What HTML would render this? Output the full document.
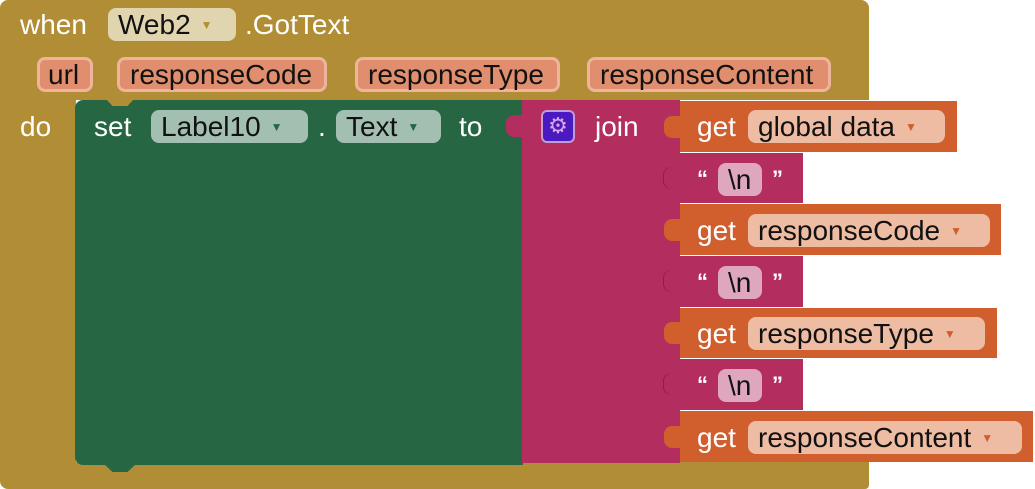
<!DOCTYPE html>
<html><head><style>
*{margin:0;padding:0;box-sizing:border-box}
body{width:1035px;height:489px;background:#fff;position:relative;overflow:hidden;font-family:"Liberation Sans",Arial,sans-serif;font-size:28px}
.a{position:absolute}
.t{position:absolute;color:#fff;line-height:33px;white-space:nowrap}
.f{position:absolute;border-radius:8px;color:#111;line-height:33px;padding-left:10px;white-space:nowrap;height:33px}
.dd{font-size:12px;vertical-align:5px;margin-left:10px}
.q{font-size:22px;font-weight:bold}
</style></head><body>
<div class="a" style="left:0;top:0;width:869px;height:100px;background:#B18E35;border-radius:8px 8px 0 0"></div>
<div class="a" style="left:0;top:90px;width:76px;height:380px;background:#B18E35"></div>
<div class="a" style="left:0;top:462px;width:869px;height:27px;background:#B18E35;border-radius:0 0 4px 8px"></div>
<div class="t" style="left:20px;top:8px">when</div>
<div class="f" style="left:108px;top:8px;width:128px;background:#E1D5AF">Web2<span class="dd" style="color:#B18E35">▼</span></div>
<div class="t" style="left:245px;top:8px">.GotText</div>
<div class="f" style="left:37px;top:57px;width:56px;height:35px;background:#E08E6E;border:3px solid #EDB59C;padding-left:8px;line-height:29px">url</div>
<div class="f" style="left:117px;top:57px;width:210px;height:35px;background:#E08E6E;border:3px solid #EDB59C;line-height:29px">responseCode</div>
<div class="f" style="left:355px;top:57px;width:205px;height:35px;background:#E08E6E;border:3px solid #EDB59C;line-height:29px">responseType</div>
<div class="f" style="left:587px;top:57px;width:244px;height:35px;background:#E08E6E;border:3px solid #EDB59C;line-height:29px">responseContent</div>
<div class="t" style="left:20px;top:110px">do</div>
<div class="a" style="left:75px;top:100px;width:448px;height:365px;background:#266643;border-radius:8px 0 0 8px"></div>
<div class="a" style="left:105px;top:98px;width:30px;height:8px;background:#B18E35;clip-path:polygon(0 0,100% 0,75% 100%,25% 100%)"></div>
<div class="a" style="left:105px;top:465px;width:30px;height:7px;background:#266643;clip-path:polygon(0 0,100% 0,75% 100%,25% 100%)"></div>
<div class="t" style="left:94px;top:110px">set</div>
<div class="f" style="left:151px;top:110px;width:157px;background:#A3BFB1">Label10<span class="dd" style="color:#266643">▼</span></div>
<div class="t" style="left:318px;top:110px">.</div>
<div class="f" style="left:336px;top:110px;width:105px;background:#A3BFB1">Text<span class="dd" style="color:#266643">▼</span></div>
<div class="t" style="left:459px;top:110px">to</div>
<div class="a" style="left:522px;top:100px;width:158px;height:363px;background:#B32D5E"></div>
<div class="a" style="left:506px;top:115px;width:18px;height:22px;background:#B32D5E;border-radius:8px 0 0 8px"></div>
<div class="a" style="left:541px;top:110px;width:34px;height:33px;background:#4A1AC0;border:2px solid #C29BD9;border-radius:6px;color:#D9A6E8;font-size:22px;line-height:28px;text-align:center">⚙</div>
<div class="t" style="left:595px;top:110px">join</div>

<div class="a" style="left:680px;top:101px;width:277px;height:51px;background:#D05F2D"></div>
<div class="t" style="left:697px;top:110px">get</div>
<div class="f" style="left:748px;top:110px;width:197px;background:#EEBBA3">global data<span class="dd" style="color:#D05F2D">▼</span></div>

<div class="a" style="left:680px;top:153px;width:123px;height:50px;background:#B32D5E"></div>
<div class="t q" style="left:697px;top:162px">“</div>
<div class="f" style="left:718px;top:163px;width:44px;background:#DFA6BF">\n</div>
<div class="t q" style="left:772px;top:162px">”</div>

<div class="a" style="left:680px;top:204px;width:321px;height:51px;background:#D05F2D"></div>
<div class="t" style="left:697px;top:214px">get</div>
<div class="f" style="left:748px;top:214px;width:242px;background:#EEBBA3">responseCode<span class="dd" style="color:#D05F2D">▼</span></div>

<div class="a" style="left:680px;top:256px;width:123px;height:51px;background:#B32D5E"></div>
<div class="t q" style="left:697px;top:265px">“</div>
<div class="f" style="left:718px;top:266px;width:44px;background:#DFA6BF">\n</div>
<div class="t q" style="left:772px;top:265px">”</div>

<div class="a" style="left:680px;top:308px;width:317px;height:50px;background:#D05F2D"></div>
<div class="t" style="left:697px;top:317px">get</div>
<div class="f" style="left:748px;top:317px;width:237px;background:#EEBBA3">responseType<span class="dd" style="color:#D05F2D">▼</span></div>

<div class="a" style="left:680px;top:359px;width:123px;height:51px;background:#B32D5E"></div>
<div class="t q" style="left:697px;top:368px">“</div>
<div class="f" style="left:718px;top:369px;width:44px;background:#DFA6BF">\n</div>
<div class="t q" style="left:772px;top:368px">”</div>

<div class="a" style="left:680px;top:411px;width:353px;height:51px;background:#D05F2D"></div>
<div class="t" style="left:697px;top:421px">get</div>
<div class="f" style="left:748px;top:421px;width:274px;background:#EEBBA3">responseContent<span class="dd" style="color:#D05F2D">▼</span></div>

<div class="a" style="left:664px;top:116px;width:18px;height:22px;background:#D05F2D;border-radius:8px 0 0 8px"></div>
<div class="a" style="left:664px;top:167px;width:18px;height:22px;background:#B32D5E;border-radius:8px 0 0 8px;box-shadow:-1px 0 0 #8a2247"></div>
<div class="a" style="left:664px;top:219px;width:18px;height:22px;background:#D05F2D;border-radius:8px 0 0 8px"></div>
<div class="a" style="left:664px;top:270px;width:18px;height:22px;background:#B32D5E;border-radius:8px 0 0 8px;box-shadow:-1px 0 0 #8a2247"></div>
<div class="a" style="left:664px;top:322px;width:18px;height:22px;background:#D05F2D;border-radius:8px 0 0 8px"></div>
<div class="a" style="left:664px;top:373px;width:18px;height:22px;background:#B32D5E;border-radius:8px 0 0 8px;box-shadow:-1px 0 0 #8a2247"></div>
<div class="a" style="left:664px;top:426px;width:18px;height:22px;background:#D05F2D;border-radius:8px 0 0 8px"></div>
</body></html>
